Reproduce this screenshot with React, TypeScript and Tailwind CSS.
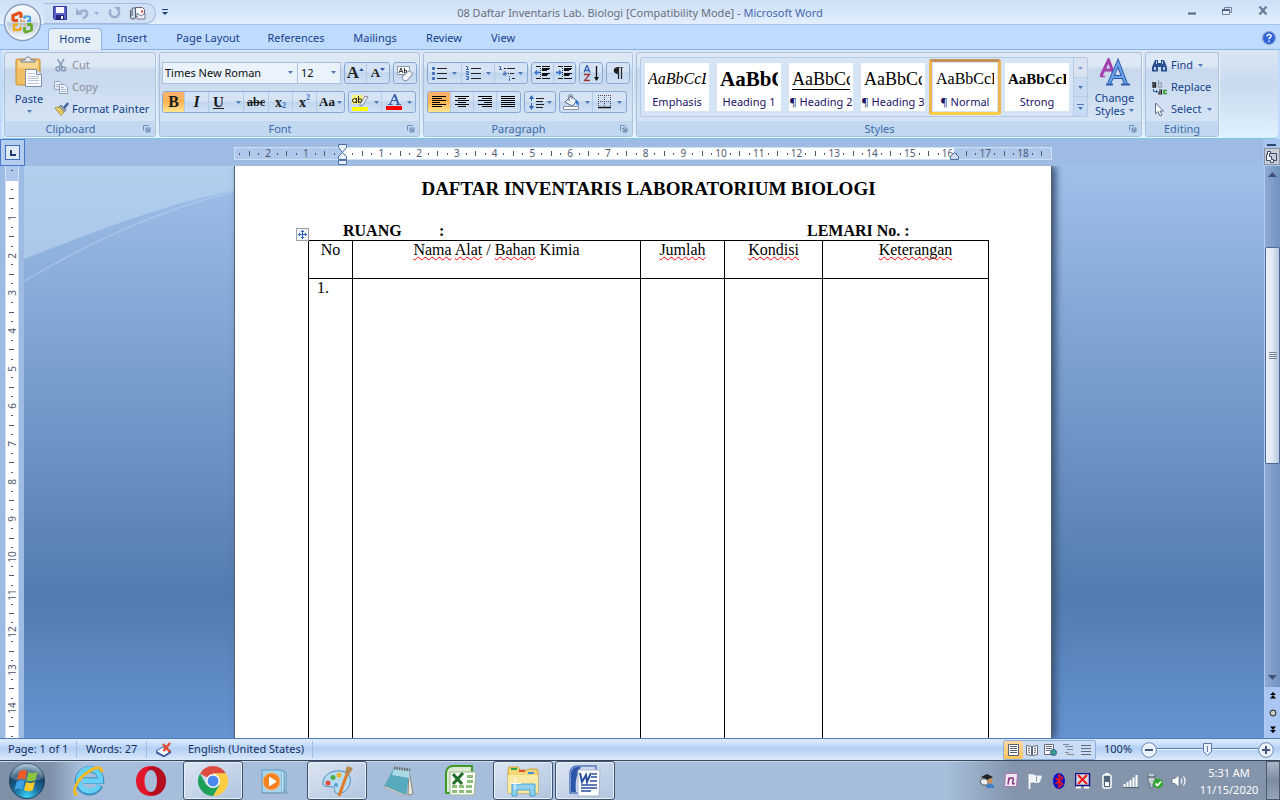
import React from "react";

type Kids = { children?: React.ReactNode; className?: string };

function Art({ w, h, children, className = "" }: Kids & { w: number; h: number }) {
  return (
    <svg aria-hidden="true" width={w} height={h} viewBox={`0 0 ${w} ${h}`} fill="none" className={`shrink-0 ${className}`}>
      {children}
    </svg>
  );
}

function Caret({ className = "" }: { className?: string }) {
  return (
    <Art w={5} h={3} className={className}>
      <path d="M0 0h5L2.500 3z" fill="#4d78b8" />
    </Art>
  );
}

function Group({ title, launcher, className = "", children }: Kids & { title: string; launcher?: boolean }) {
  return (
    <section
      aria-label={title}
      className={`flex shrink-0 flex-col overflow-hidden rounded-[3px] border border-[#a9c1de] bg-linear-to-b from-[#dde8f5] from-15% via-[#c8d8ed] via-20% to-[#d9e8f7] shadow-[1px_1px_0_#eaf3fc] ${className}`}
    >
      <div className="flex min-h-0 flex-1">{children}</div>
      <div className="flex h-[15px] shrink-0 items-center bg-[#c1d8f0] text-[#3e6aaa]">
        <span className={`flex-1 text-center leading-[15px] ${launcher ? "pr-[6px]" : ""}`}>{title}</span>
        {launcher && (
          <button aria-label={`${title} options`} className="mr-1">
            <Art w={9} h={9}>
              <path d="M1.500 6.500v-5h5" stroke="#6b8fbd" />
              <path d="M4 4h4v4H4z" fill="#fff" stroke="#6b8fbd" />
              <path d="M4 4l3 3M7 4.500V7H4.500" stroke="#4a6f9f" />
            </Art>
          </button>
        )}
      </div>
    </section>
  );
}

function Cluster({ children }: Kids) {
  return (
    <div className="flex h-[22px] shrink-0 divide-x divide-[#b4cbe8] overflow-hidden rounded-[3px] border border-[#89a9d5] bg-linear-to-b from-[#d6e3f4] from-45% via-[#c0d5ee] via-50% to-[#d0e1f5]">
      {children}
    </div>
  );
}

function Tool({ label, arrow, on, className = "w-[23px]", children }: Kids & { label: string; arrow?: boolean; on?: boolean }) {
  return (
    <button
      aria-label={label}
      className={`flex h-full items-center justify-center ${arrow ? "gap-[5px]" : ""} ${on ? "bg-linear-to-b from-[#f9b469] from-20% via-[#fdb04c] via-45% to-[#ffe78d]" : ""} ${className}`}
    >
      {children}
      {arrow && <Caret />}
    </button>
  );
}

function Lines({ rows }: { rows: [number, number][] }) {
  return (
    <Art w={15} h={12}>
      {rows.map(([x, w], i) => (
        <path key={i} d={`M${x} ${i * 2 + 0.5}h${w}`} stroke="#000" />
      ))}
    </Art>
  );
}

function ListIcon({ marks }: { marks: React.ReactNode }) {
  return (
    <Art w={15} h={14}>
      {marks}
      <path d="M5 2.500h10M5 7.500h10M5 12.500h10" stroke="#222" />
    </Art>
  );
}

function IndentIcon({ left }: { left?: boolean }) {
  return (
    <Art w={17} h={14}>
      <path d="M2 .5h4M8 .5h8M8 2.500h8M8 4.500h5M8 7.500h8M8 9.500h5M2 12.500h4M8 12.500h8" stroke="#111" />
      <path d="M8 3.500h7M8 8.500h6" stroke="#111" />
      <path d="M6.500 0v14" stroke="#333" strokeDasharray="1 1" />
      {left ? <path d="M0 6.500l3-3v2h3v2H3v2z" fill="#3b74d0" /> : <path d="M6 6.500l-3-3v2H0v2h3v2z" fill="#3b74d0" />}
    </Art>
  );
}

const tabs = [
  ["Insert", "w-[54px] mr-[9px]"],
  ["Page Layout", "w-[80px] mr-[12px]"],
  ["References", "w-[72px] mr-[12px]"],
  ["Mailings", "w-[62px] mr-[12px]"],
  ["Review", "w-[52px] mr-[14px]"],
  ["View", "w-[38px]"],
];

const styleCards = [
  { name: "Emphasis", text: "AaBbCcD", sample: "text-[16px] italic" },
  { name: "Heading 1", text: "AaBbC", sample: "text-[21px] font-bold" },
  { name: "¶ Heading 2", text: "AaBbCc", sample: "text-[18px] underline underline-offset-4" },
  { name: "¶ Heading 3", text: "AaBbCc", sample: "text-[18px]" },
  { name: "¶ Normal", text: "AaBbCcD", sample: "text-[16px]", on: true },
  { name: "Strong", text: "AaBbCcD", sample: "text-[15px] font-bold" },
];

function TitleBar() {
  return (
    <header className="relative flex h-[25px] shrink-0 items-center border-b border-[#a5c6ef] bg-linear-to-b from-[#cfe0f6] via-[#d6e6fa] to-[#e4effd]">
      <div className="mt-[2px] ml-[44px] flex h-[21px] w-[112px] items-center rounded-r-full border border-l-0 border-[#9fbbe0] bg-[#d0e1f6] pl-[9px]">
        <button aria-label="Save">
          <Art w={14} h={14}>
            <path d="M.5.5h13v13h-12l-1-1z" fill="#5a62c8" stroke="#33389a" />
            <path d="M3 1h8v6H3z" fill="#f4f7ff" />
            <path d="M3 9h8v5H3z" fill="#23277c" />
            <path d="M8 10h2v3H8z" fill="#fff" />
          </Art>
        </button>
        <button aria-label="Undo" className="ml-[9px]">
          <Art w={13} h={13}>
            <path d="M4 5.500c4-3.500 7.500-1.500 7 1.500-.3 2-2 3.500-4 4.500" stroke="#9cafcf" strokeWidth="2.600" />
            <path d="M0 1v7h7z" fill="#9cafcf" />
          </Art>
        </button>
        <Caret className="ml-[5px] opacity-50" />
        <button aria-label="Repeat" className="ml-[9px]">
          <Art w={13} h={13}>
            <path d="M3 2.500a4.600 4.600 0 1 0 7 0" stroke="#9cafcf" strokeWidth="2.600" />
            <path d="M6 0h6v6z" fill="#9cafcf" />
          </Art>
        </button>
        <button aria-label="Attach to e-mail" className="ml-[8px]">
          <Art w={17} h={15}>
            <path d="M6.500 1.500h7l2 2v7h-9z" fill="#fff" stroke="#667" />
            <path d="M8 7l4 3 4-3v6H8z" fill="#eef" stroke="#778" />
            <path d="M12 4.500h2v2h-2z" fill="#e33" />
            <path d="M1.500 4v6.500a2.500 2.500 0 0 0 5 0V3.500a1.700 1.700 0 0 0-3.400 0V10" stroke="#56606e" strokeWidth="1.100" />
          </Art>
        </button>
      </div>
      <button aria-label="Customize toolbar" className="ml-[6px]">
        <Art w={6} h={6}>
          <path d="M0 .5h6" stroke="#1c3f75" />
          <path d="M0 3h6L3 6z" fill="#1c3f75" />
        </Art>
      </button>
      <h1 className="flex-1 pt-[3px] pr-[76px] text-center text-[#6a6f7c]">
        08 Daftar Inventaris Lab. Biologi [Compatibility Mode] <span className="text-[#4668ad]">- Microsoft Word</span>
      </h1>
      <div className="flex items-center gap-[26px] pr-[12px] pb-[3px]">
        <button aria-label="Minimize">
          <Art w={8} h={8}>
            <path d="M0 6.500h8" stroke="#536582" strokeWidth="2" />
          </Art>
        </button>
        <button aria-label="Restore">
          <Art w={10} h={8}>
            <path d="M2.500 2V.5h7v5H8" stroke="#6f83a5" />
            <path d="M.5 2.500h7v5h-7z" fill="#e6effb" stroke="#6f83a5" />
            <path d="M0 3h8" stroke="#536582" strokeWidth="2" />
          </Art>
        </button>
        <button aria-label="Close">
          <Art w={10} h={9}>
            <path d="M1.500.5l7 8M8.500.5l-7 8" stroke="#6a7c9a" strokeWidth="2.300" />
          </Art>
        </button>
      </div>
      <button aria-label="Office menu" className="absolute top-[3px] left-[3px] z-10">
        <Art w={39} h={39}>
          <defs>
            <linearGradient id="orb" x1="0" y1="0" x2="0" y2="1">
              <stop offset="0" stopColor="#fff" />
              <stop offset=".48" stopColor="#dce5f0" />
              <stop offset=".52" stopColor="#bccbdd" />
              <stop offset="1" stopColor="#fafdff" />
            </linearGradient>
          </defs>
          <circle cx="19.500" cy="19.500" r="18" fill="url(#orb)" stroke="#8a9fbe" strokeWidth="1.500" />
          <circle cx="19.500" cy="19.500" r="16.500" stroke="#f6faff" />
          <path d="M15 17.500h-3.500a1.500 1.500 0 0 1-1.500-1.500v-3.500l6-2.500a1.500 1.500 0 0 1 2 1.500V15" stroke="#e2531b" strokeWidth="3.200" />
          <path d="M21.500 16v-2.500h4.500a1 1 0 0 1 1 1V18h-3" stroke="#4d9fe0" strokeWidth="2.200" />
          <path d="M15 21.500h-3a1 1 0 0 0-1 1V27h5.500a1 1 0 0 0 1-1v-2" stroke="#f2a61d" strokeWidth="2.500" />
          <path d="M24 21.500h3.500a1 1 0 0 1 1 1v4.500l-5 2a1.500 1.500 0 0 1-2-1.500V24" stroke="#66ab2e" strokeWidth="2.800" />
          <path d="M17 17.500h1.500v1.500M21 19v-1.500M17.500 21.500h1M21 21.500h1" stroke="#e88a3a" strokeWidth="1.500" />
        </Art>
      </button>
    </header>
  );
}

function ClipboardGroup() {
  return (
    <Group title="Clipboard" launcher className="w-[152px]">
      <button className="flex w-[48px] flex-col items-center pt-[3px] text-[#15428b]">
        <Art w={28} h={32}>
          <rect x="1" y="3" width="24" height="26" rx="1.500" fill="#f0bf63" stroke="#c48f35" />
          <path d="M3 5h20v7H3z" fill="#f8d68f" />
          <path d="M6 6V4h4c0-4 6-4 6 0h4v2z" fill="#e8ebf0" stroke="#777f8c" />
          <path d="M10.500 13.500h11l5 5v12h-16z" fill="#fdfdff" stroke="#7d8fae" />
          <path d="M21.500 13.500v5h5" stroke="#7d8fae" fill="#dfe8f5" />
          <path d="M13 17.500h7M13 20.500h11M13 22.500h11M13 24.500h11M13 27.500h11" stroke="#b9c4d8" />
        </Art>
        <span className="mt-[3px] leading-[15px]">Paste</span>
        <Caret className="mt-[4px]" />
      </button>
      <div className="flex flex-col pt-[1px] pl-px text-[#8b8f99]">
        <button className="flex h-[22px] items-center gap-[4px]">
          <Art w={14} h={14}>
            <path d="M3.500 1l5 8.500M10 1L5 9.500" stroke="#8b9bb5" strokeWidth="1.500" />
            <circle cx="4" cy="11" r="2" stroke="#8b9bb5" strokeWidth="1.500" />
            <circle cx="9.500" cy="11" r="2" stroke="#8b9bb5" strokeWidth="1.500" />
          </Art>
          Cut
        </button>
        <button className="flex h-[22px] items-center gap-[4px]">
          <Art w={14} h={13}>
            <path d="M.5.5h5l2 2v6h-7z" fill="#e9eef7" stroke="#93a3bd" />
            <path d="M2 3.500h3M2 5.500h4" stroke="#a9b6cb" />
            <path d="M5.500 3.500h5l3 3v6h-8z" fill="#f0f4fa" stroke="#93a3bd" />
            <path d="M7 6.500h3M7 8.500h5M7 10.500h5" stroke="#a9b6cb" />
          </Art>
          Copy
        </button>
        <button className="flex h-[22px] items-center gap-[3px] text-[#15428b]">
          <Art w={15} h={14}>
            <path d="M9 5l4.500-5L15 2l-4 5z" fill="#4765a8" />
            <path d="M7 3l5 5-2 2-5-5z" fill="#9aa7bd" stroke="#515d74" strokeWidth=".7" />
            <path d="M1 6l4.500-1 4.500 5-3 3.500z" fill="#f7df7c" stroke="#9a7b2d" strokeWidth=".8" />
            <path d="M3 7.500l5 4M4.500 6.500l4 4" stroke="#c09c40" strokeWidth=".7" />
          </Art>
          Format Painter
        </button>
      </div>
    </Group>
  );
}

function FontGroup() {
  return (
    <Group title="Font" launcher className="w-[261px]">
      <div className="flex flex-col gap-[7px] pt-[9px] pl-[2px]">
        <div className="flex items-center">
          <label className="relative">
            <select aria-label="Font family" className="h-[22px] w-[136px] appearance-none border border-[#abc1de] bg-[#eaf2fb] pl-[2px] leading-[20px] text-[#111]">
              <option>Times New Roman</option>
            </select>
            <Caret className="absolute top-[9px] right-[5px]" />
          </label>
          <label className="relative">
            <select aria-label="Font size" className="h-[22px] w-[43px] appearance-none border border-l-0 border-[#abc1de] bg-[#eaf2fb] pl-[3px] leading-[20px] text-[#111]">
              <option>12</option>
            </select>
            <Caret className="absolute top-[9px] right-[5px]" />
          </label>
          <div className="ml-[3px] flex gap-[3px] font-['Liberation_Serif',serif] font-bold text-[#222]">
            <Cluster>
              <Tool label="Grow font" className="w-[22px] text-[17px]">
                A
                <Art w={5} h={10}>
                  <path d="M0 3h5L2.500 0z" fill="#2f5ca8" />
                </Art>
              </Tool>
              <Tool label="Shrink font" className="w-[22px] text-[13px]">
                A
                <Art w={5} h={10}>
                  <path d="M0 0h5L2.500 3z" fill="#2f5ca8" />
                </Art>
              </Tool>
            </Cluster>
            <Cluster>
              <Tool label="Clear formatting" className="w-[22px]">
                <Art w={16} h={17}>
                  <path d="M.5 1.500h12v8H.5z" fill="#fff" stroke="#8a97ad" />
                  <path d="M2 8l2-5 2 5M3 6.500h2" stroke="#222" strokeWidth=".9" />
                  <path d="M7.500 3v5h2V5.500h-2" stroke="#222" strokeWidth=".9" />
                  <path d="M5 12l6-5.500c2-1 5 1 4 3.500l-5 5.500c-3 1-5-1-5-3.500z" fill="#f1f3f8" stroke="#77839b" />
                </Art>
              </Tool>
            </Cluster>
          </div>
        </div>
        <div className="flex gap-[3px] font-['Liberation_Serif',serif] text-[#1a1a1a]">
          <Cluster>
            <Tool label="Bold" on className="w-[22px] text-[16px] font-bold">B</Tool>
            <Tool label="Italic" className="w-[24px] text-[16px] font-bold italic">I</Tool>
            <Tool label="Underline" arrow className="w-[35px] pl-[2px] text-[15px] font-bold">
              <span className="underline">U</span>
              <span className="w-[2px]" />
            </Tool>
            <Tool label="Strikethrough" className="w-[25px] text-[12px] font-bold line-through">abc</Tool>
            <Tool label="Subscript" className="w-[24px] text-[14px] font-bold">
              x<span className="mt-[8px] text-[8px] text-[#2f6ac8]">2</span>
            </Tool>
            <Tool label="Superscript" className="w-[24px] text-[14px] font-bold">
              x<span className="mb-[9px] text-[8px] text-[#2f6ac8]">2</span>
            </Tool>
            <Tool label="Change case" className="w-[27px] text-[13px] font-bold">
              Aa<Caret className="ml-[2px]" />
            </Tool>
          </Cluster>
          <Cluster>
            <Tool label="Highlight color" arrow className="w-[33px]">
              <Art w={17} h={17}>
                <path d="M0 1h11v9H0z" fill="#f6f17c" />
                <path d="M8 10l5-8 3 1-5 8-3 1z" fill="#e5e9f1" stroke="#6b7689" strokeWidth=".8" />
                <circle cx="2.500" cy="6.500" r="2" stroke="#222" />
                <path d="M4.500 4v5M6.500 2v7" stroke="#222" />
                <circle cx="8" cy="6.500" r="1.700" stroke="#222" />
                <path d="M0 13h16v4H0z" fill="#ff0" />
              </Art>
            </Tool>
            <Tool label="Font color" arrow className="w-[33px]">
              <Art w={16} h={16}>
                <path d="M8 0h1.500l4 10H15v1h-5v-1h1.300L10.200 7H6l-1 3h1.500v1H2v-1h1.500z M8 2.500L6.400 6h3.400z" fill="#365ea8" fillRule="evenodd" />
                <path d="M0 12h16v4H0z" fill="#f00" />
              </Art>
            </Tool>
          </Cluster>
        </div>
      </div>
    </Group>
  );
}

function ParagraphGroup() {
  return (
    <Group title="Paragraph" launcher className="w-[210px]">
      <div className="flex flex-col gap-[7px] pt-[9px] pl-[3px]">
        <div className="flex gap-[3px]">
          <Cluster>
            <Tool label="Bullets" arrow className="w-[34px]">
              <ListIcon
                marks={
                  <g fill="#3f68b5">
                    <rect y="1" width="3" height="3" rx="1" />
                    <rect y="6" width="3" height="3" rx="1" />
                    <rect y="11" width="3" height="3" rx="1" />
                  </g>
                }
              />
            </Tool>
            <Tool label="Numbering" arrow className="w-[33px]">
              <ListIcon marks={<path d="M0 .5h1.500v3M0 3.500h3M0 5.500h2.500v1.500H.5v1.500H3M0 10.500h2.500v3H0M1 12h1.500" stroke="#3f68b5" />} />
            </Tool>
            <Tool label="Multilevel list" className="w-[32px] gap-[2px]">
              <Art w={17} h={15}>
                <path d="M0 .5h1.500v3M0 3.500h3M4.500 6h2.500v3H4.500V7.500H7M10.500 10v1M10.500 12v3" stroke="#3f68b5" />
                <path d="M5 2.500h2M8 2.500h8M9 7.500h1M11 7.500h4M13 12.500h3" stroke="#222" />
              </Art>
              <Caret />
            </Tool>
          </Cluster>
          <Cluster>
            <Tool label="Decrease indent" className="w-[22px]">
              <IndentIcon left />
            </Tool>
            <Tool label="Increase indent" className="w-[21px]">
              <IndentIcon />
            </Tool>
          </Cluster>
          <Cluster>
            <Tool label="Sort" className="w-[22px]">
              <Art w={17} h={17}>
                <path d="M1 7.500L4 0l3 7.500M2 5.500h4" stroke="#3564b5" strokeWidth="1.300" />
                <path d="M1 9.500h5.500l-5 6H7" stroke="#a03333" strokeWidth="1.300" />
                <path d="M13.500 1v14" stroke="#111" strokeWidth="1.300" />
                <path d="M11 12h5l-2.500 4z" fill="#111" />
              </Art>
            </Tool>
          </Cluster>
          <Cluster>
            <Tool label="Show marks" className="w-[22px]">
              <Art w={12} h={12}>
                <path d="M6 0H11.500M6.500 0v12M9.500 0v12" stroke="#222" strokeWidth="1.200" />
                <path d="M6.500 0C0 0 0 7 6.500 7z" fill="#222" />
              </Art>
            </Tool>
          </Cluster>
        </div>
        <div className="flex gap-[3px]">
          <Cluster>
            <Tool label="Align left" on>
              <Lines rows={[[0, 14], [0, 10], [0, 14], [0, 8], [0, 14], [0, 10]]} />
            </Tool>
            <Tool label="Center">
              <Lines rows={[[0, 14], [3, 8], [0, 14], [3, 8], [0, 14], [3, 8]]} />
            </Tool>
            <Tool label="Align right">
              <Lines rows={[[0, 14], [4, 10], [0, 14], [6, 8], [0, 14], [4, 10]]} />
            </Tool>
            <Tool label="Justify">
              <Lines rows={[[0, 14], [0, 14], [0, 14], [0, 14], [0, 14], [0, 14]]} />
            </Tool>
          </Cluster>
          <Cluster>
            <Tool label="Line spacing" className="w-[30px] gap-[2px]">
              <Art w={16} h={15}>
                <path d="M2.500 2v11" stroke="#2f62b8" strokeDasharray="4 2 6" />
                <path d="M0 4l2.500-4L5 4zM0 11l2.500 4L5 11z" fill="#2f62b8" />
                <path d="M7 3.500h8M7 6.500h7M7 9.500h8M7 12.500h7" stroke="#222" />
              </Art>
              <Caret />
            </Tool>
          </Cluster>
          <Cluster>
            <Tool label="Shading" arrow className="w-[33px]">
              <Art w={17} h={16}>
                <path d="M2 8l6-6 6 5-5 5z" fill="#eef2f9" stroke="#5c6a84" />
                <path d="M6 7V2c0-2 3-2 3 0v3" stroke="#5c6a84" />
                <path d="M13 6c3 1 3 4 2.500 6-1.500-1-2-3-3.500-4z" fill="#2f6ac8" />
                <path d="M.5 12.500h15v3H.5z" fill="#fff" stroke="#8893a6" />
              </Art>
            </Tool>
            <Tool label="Borders" arrow className="w-[33px]">
              <Art w={14} h={14}>
                <path d="M0 .5h13M0 6.500h13M.5 0v12M6.500 0v12M12.500 0v12" stroke="#445" strokeDasharray="1 1" />
                <path d="M0 12.500h13" stroke="#111" strokeWidth="1.400" />
              </Art>
            </Tool>
          </Cluster>
        </div>
      </div>
    </Group>
  );
}

function StylesGroup() {
  return (
    <Group title="Styles" launcher className="w-[506px]">
      <div className="mt-[4px] ml-[3px] flex h-[60px] rounded-[2px] border border-[#b4cbe8] bg-[#d5e5f6]">
        <div className="flex items-center">
          {styleCards.map((s) => (
            <button
              key={s.name}
              className={`flex h-[56px] w-[72px] flex-col border-[3px] p-px ${s.on ? "rounded-[3px] border-[#eeb44f] border-t-[#c29158] border-b-[#fbcf45]" : "border-transparent"}`}
            >
              <span className="flex h-[48px] w-[64px] flex-col bg-white">
                <span className={`ml-[3px] flex h-[31px] w-[58px] items-center overflow-hidden text-left font-['Liberation_Serif',serif] leading-[30px] text-black ${s.sample}`}>
                  {s.text}
                </span>
                <span className="text-center leading-[16px] whitespace-nowrap text-[#1a1466]">{s.name}</span>
              </span>
            </button>
          ))}
        </div>
        <div className="flex w-[14px] flex-col divide-y divide-[#b4cbe8] border-l border-[#b4cbe8] bg-[#c8dbf2]">
          <button aria-label="Previous styles" className="flex flex-1 items-center justify-center bg-[#e6e9ee] opacity-60">
            <Caret className="rotate-180" />
          </button>
          <button aria-label="Next styles" className="flex flex-1 items-center justify-center">
            <Caret />
          </button>
          <button aria-label="All styles" className="flex flex-1 flex-col items-center justify-center gap-[2px]">
            <span className="h-px w-[7px] bg-[#4d78b8]" />
            <Caret />
          </button>
        </div>
      </div>
      <button className="flex flex-1 flex-col items-center pt-[5px] text-[#15428b]">
        <Art w={30} h={29}>
          <path d="M1 18L8.500 2l6 16M4 12h8" stroke="#a43fae" strokeWidth="3" />
          <path d="M0 18.500h5" stroke="#a43fae" strokeWidth="1.500" />
          <path d="M9 26L18 5l8 21M12.500 19h11" stroke="#2c5fb0" strokeWidth="4" />
          <path d="M9 26L18 5l8 21M12.500 19h11" stroke="#6ea3e8" strokeWidth="2" />
          <path d="M6 26.500h7M21 26.500h9" stroke="#2c5fb0" strokeWidth="2" />
        </Art>
        <span className="mt-[4px] leading-[13px]">Change</span>
        <span className="flex items-center gap-[4px] leading-[13px]">
          Styles <Caret />
        </span>
      </button>
    </Group>
  );
}

function EditingGroup() {
  return (
    <Group title="Editing" className="w-[74px]">
      <div className="flex flex-col pt-[1px] pl-[6px] text-[#15428b]">
        <button className="flex h-[22px] items-center gap-[4px]">
          <Art w={15} h={13}>
            <path d="M3 1h3v3h3V1h3l3 7v4.500H9V8H6v4.500H0V8z" fill="#2c4f8f" />
            <path d="M2 8h2v3H2zM11 8h2v3h-2zM4 2h1v3H4zM10 2h1v3h-1z" fill="#b8cdf0" />
          </Art>
          Find <Caret className="ml-[1px]" />
        </button>
        <button className="flex h-[22px] items-center gap-[4px]">
          <Art w={15} h={15}>
            <path d="M0 3h3.500v4H1V5h3" stroke="#222" strokeWidth="1.300" />
            <path d="M6.500 0v7h3V3h-3" stroke="#9aa3b3" strokeWidth="1.300" />
            <path d="M1.500 9v2.500H5M4 10l1.500 1.500L4 13" stroke="#2f5ca8" />
            <path d="M7 10h2.500v4H7v-2h2.500" stroke="#222" strokeWidth="1.200" />
            <path d="M15 10.500h-3v3h3" stroke="#2c9a2c" strokeWidth="1.500" />
          </Art>
          Replace
        </button>
        <button className="flex h-[22px] items-center gap-[4px]">
          <Art w={15} h={15}>
            <path d="M3.500 1v11l2.500-2.500L8 14l2-1-2-4h3.500z" fill="#fff" stroke="#5a6d8c" />
          </Art>
          Select <Caret className="ml-[1px]" />
        </button>
      </div>
    </Group>
  );
}

function range(from: number, to: number) {
  return Array.from({ length: to - from + 1 }, (_, i) => from + i);
}

function Ruler() {
  return (
    <div className="flex h-[27px] shrink-0 bg-[#9dbbe3]">
      <div className="flex w-[25px] items-center justify-center border border-[#4a78c8] bg-[#b5cdee]">
        <button aria-label="Tab stop" className="flex h-[15px] w-[15px] items-center justify-center border border-[#3f6cb8] bg-[#dfe9f7]">
          <Art w={6} h={6}>
            <path d="M1 0v5h5" stroke="#1f3f6e" strokeWidth="2" />
          </Art>
        </button>
      </div>
      <div className="flex flex-1 justify-center pt-[8px] pr-[2px]">
        <div className="relative flex h-[13px] w-[818px] border border-[#cfdff5] bg-linear-to-r from-[#afc8ec] from-[107px] via-white via-[107px] to-white to-[720px] pr-[5px]">
          <div className="absolute inset-y-0 right-0 w-[97px] bg-[#afc8ec]" />
          <div className="relative flex flex-1 text-[10px] text-[#4e5a70]">
            {range(-11, 74).map((q) => (
              <span key={q} className="flex w-0 flex-1 items-center justify-center">
                {q % 4 === 0 ? (
                  q !== 0 && <span className="leading-[11px]">{Math.abs(q / 4)}</span>
                ) : q % 2 === 0 ? (
                  <span className="h-[5px] w-px bg-[#4e5a70]" />
                ) : (
                  <span className="h-[2px] w-px bg-[#4e5a70]" />
                )}
              </span>
            ))}
          </div>
          <Art w={11} h={22} className="absolute -top-[4px] left-[102px]">
            <path d="M1.500.5h8v3l-4 5-4-5zM5.500 8.500l4 4v3h-8v-3z" fill="#e8eef8" stroke="#4e6fa5" />
            <path d="M1.500 16.500h8v4h-8z" fill="#e8eef8" stroke="#4e6fa5" />
          </Art>
          <Art w={9} h={9} className="absolute top-[4px] right-[92px]">
            <path d="M4.500.5l4 4v3h-8v-3z" fill="#cfdcf0" stroke="#4e6fa5" />
          </Art>
        </div>
      </div>
      <div className="flex w-[17px] flex-col items-center gap-[2px] bg-[#a8c6f0] pt-[5px]">
        <span className="h-[2px] w-[9px] bg-[#38456b]" />
        <button aria-label="View ruler" className="flex h-[17px] w-[16px] items-center justify-center border border-[#8c93a5] bg-[#c9ccd6]">
          <Art w={13} h={12}>
            <path d="M4.500 2.500h7v7h-3" stroke="#3a4a68" />
            <path d="M2.500.5h3v2h-1v3h2v3h2v3h-3v-2h-4v-6h1z" fill="#f4f7fc" stroke="#3a4a68" />
          </Art>
        </button>
      </div>
    </div>
  );
}

function Misspelt({ children }: Kids) {
  return <span className="underline decoration-[#ff0000] decoration-wavy decoration-1 underline-offset-1 [text-decoration-skip-ink:none]">{children}</span>;
}

function Workspace() {
  return (
    <main className="relative flex min-h-0 flex-1 overflow-hidden bg-linear-to-b from-[#9fc0e9] via-[#527cb0] via-75% to-[#6693d2]">
      <div className="flex w-[24px] shrink-0 justify-center bg-[#9dbbe3] pr-px">
        <div className="relative h-full w-[14px] overflow-hidden border-x border-[#cfdff5] bg-white">
          <div className="h-[15px] bg-[#afc8ec]" />
          <div className="absolute inset-x-0 top-0 flex h-[575px] flex-col text-[10px] text-[#4e5a70]">
            {range(-1, 59).map((q) => (
              <span key={q} className="flex h-0 flex-1 items-center justify-center">
                {q % 4 === 0 ? (
                  q !== 0 && <span className="-rotate-90 leading-[12px]">{q / 4}</span>
                ) : q % 2 === 0 ? (
                  <span className="h-px w-[5px] bg-[#4e5a70]" />
                ) : (
                  <span className="h-px w-[2px] bg-[#4e5a70]" />
                )}
              </span>
            ))}
          </div>
        </div>
      </div>
      <div className="relative flex flex-1 justify-center pr-[2px]">
        <Art w={212} h={120} className="absolute top-0 left-0">
          <path d="M0 0h212v24C140 38 70 66 0 93z" fill="#c3daf2" fillOpacity=".55" />
          <path d="M0 115C60 80 130 45 212 25" stroke="#b6cfee" strokeOpacity=".6" strokeWidth="1.500" />
        </Art>
        <article className="relative flex w-[818px] flex-col border-x border-[#56606e] bg-white pl-[73px] font-['Liberation_Serif',serif] text-[16px] text-black shadow-[4px_0_7px_#3d5578]">
          <h2 className="mt-[12px] pr-[62px] text-center text-[19px] leading-[22px] font-bold">DAFTAR INVENTARIS LABORATORIUM BIOLOGI</h2>
          <p className="mt-[21px] flex pl-[35px] leading-[19px] font-bold whitespace-pre">
            <span className="w-[96px]">RUANG</span>
            <span className="w-[368px]">:</span>
            <span>LEMARI No. :</span>
          </p>
          <button aria-label="Select table" className="absolute top-[62px] left-[61px] flex h-[13px] w-[13px] items-center justify-center border border-[#9aa0aa] bg-[#f0f2f6]">
            <Art w={9} h={9}>
              <path d="M4.500 0v9M0 4.500h9M3 1.500h3M3 7.500h3M1.500 3v3M7.500 3v3" stroke="#2f62c0" />
            </Art>
          </button>
          <table className="h-full w-[681px] table-fixed border-collapse [&_td]:border [&_td]:border-black [&_th]:border [&_th]:border-black">
            <colgroup>
              <col className="w-[44px]" />
              <col className="w-[288px]" />
              <col className="w-[84px]" />
              <col className="w-[98px]" />
              <col className="w-[166px]" />
            </colgroup>
            <thead>
              <tr className="h-[38px] align-top leading-[18px]">
                <th className="font-normal">No</th>
                <th className="font-normal">
                  <Misspelt>Nama</Misspelt> <Misspelt>Alat</Misspelt> / <Misspelt>Bahan</Misspelt> Kimia
                </th>
                <th className="font-normal">
                  <Misspelt>Jumlah</Misspelt>
                </th>
                <th className="font-normal">
                  <Misspelt>Kondisi</Misspelt>
                </th>
                <th className="pl-[20px] font-normal">
                  <Misspelt>Keterangan</Misspelt>
                </th>
              </tr>
            </thead>
            <tbody>
              <tr className="h-[480px] align-top leading-[18px]">
                <td className="pl-[8px]">1.</td>
                <td />
                <td />
                <td />
                <td />
              </tr>
            </tbody>
          </table>
        </article>
      </div>
      <div className="flex w-[16px] shrink-0 flex-col border-l border-[#b3cdf2] bg-linear-to-r from-[#8eaad0] to-[#7193c0]">
        <button aria-label="Scroll up" className="flex h-[81px] justify-center pt-[6px]">
          <Art w={9} h={5}>
            <path d="M0 5h9L4.500 0z" fill="#45507a" />
          </Art>
        </button>
        <div className="flex h-[217px] flex-col items-center justify-center gap-px rounded-[2px] border border-[#4c6796] bg-linear-to-r from-[#eef2fa] via-[#dfe7f2] to-[#b6c8de]">
          {range(0, 3).map((n) => (
            <span key={n} className="h-px w-[8px] bg-[#7d8695]" />
          ))}
        </div>
        <div className="flex-1" />
        <button aria-label="Scroll down" className="flex h-[12px] justify-center">
          <Art w={9} h={5}>
            <path d="M0 0h9L4.500 5z" fill="#45507a" />
          </Art>
        </button>
        <div className="flex h-[51px] flex-col items-center justify-between bg-[#a9c7f2] py-[5px]">
          <button aria-label="Previous page">
            <Art w={6} h={7}>
              <path d="M0 3h6L3 0zM0 6.500h6L3 3z" fill="#000" />
            </Art>
          </button>
          <button aria-label="Browse object">
            <Art w={8} h={8}>
              <circle cx="4" cy="4" r="3" fill="#c8ccc8" stroke="#222" />
            </Art>
          </button>
          <button aria-label="Next page">
            <Art w={6} h={7}>
              <path d="M0 .5h6L3 4zM0 4h6L3 7z" fill="#000" />
            </Art>
          </button>
        </div>
      </div>
    </main>
  );
}

function ZoomButton({ plus }: { plus?: boolean }) {
  return (
    <button aria-label={plus ? "Zoom in" : "Zoom out"}>
      <Art w={16} h={16}>
        <circle cx="8" cy="8" r="7.300" fill="#e8f0fb" stroke="#6586b5" />
        <circle cx="8" cy="8" r="5.800" stroke="#fff" />
        <path d={plus ? "M4 8h8M8 4v8" : "M4 8h8"} stroke="#44587c" strokeWidth="2" />
      </Art>
    </button>
  );
}

function StatusBar() {
  return (
    <footer className="flex h-[22px] shrink-0 items-center border-t border-[#4f7cb4] bg-linear-to-b from-[#d8e8fb] from-10% via-[#b3d0f5] via-45% to-[#dbe9fb] text-[#15305f]">
      <span className="w-[77px] border-r border-[#9fbde6] pl-[8px]">Page: 1 of 1</span>
      <span className="w-[70px] border-r border-[#9fbde6] pl-[9px]">Words: 27</span>
      <span className="flex w-[41px] pl-[8px]">
        <Art w={17} h={15}>
          <path d="M1 9l7-4 8 4-7 5z" fill="#f6f9ff" stroke="#3e5da0" />
          <path d="M1 10.500l8 4 7-4.500" stroke="#3e5da0" strokeWidth="1.500" />
          <path d="M8 2l7 8M15 1L8.500 9" stroke="#e8492c" strokeWidth="2.300" />
        </Art>
      </span>
      <span className="w-[125px] border-r border-[#9fbde6]">English (United States)</span>
      <span className="flex-1" />
      <div className="mr-[8px] flex h-[20px] items-center rounded-[2px] border border-[#8fb0de] bg-[#cadcf4]">
        <button aria-label="Print layout" className="flex h-[18px] w-[19px] items-center justify-center bg-linear-to-b from-[#fbd9a4] to-[#fdc35a]">
          <Art w={11} h={12}>
            <path d="M.5.5h10v11H.5z" fill="#fff" stroke="#56606e" />
            <path d="M2 2.500h7M2 4.500h7M2 6.500h7M2 8.500h7" stroke="#56606e" />
          </Art>
        </button>
        <button aria-label="Full screen reading" className="flex w-[18px] justify-center">
          <Art w={12} h={12}>
            <path d="M.5 1.500l5 1v9l-5-1zM11.500 1.500l-5 1v9l5-1z" fill="#fff" stroke="#5f6a7c" />
            <path d="M2 4l2 .5M2 6l2 .5M2 8l2 .5M8 4.500l2-.5M8 6.500l2-.5M8 8.500l2-.5" stroke="#5f6a7c" />
          </Art>
        </button>
        <button aria-label="Web layout" className="flex w-[18px] justify-center">
          <Art w={13} h={12}>
            <path d="M.5.5h9v10h-9z" fill="#fff" stroke="#5f6a7c" />
            <path d="M2 2.500h6M2 4.500h6M2 6.500h4" stroke="#5f6a7c" />
            <circle cx="9.500" cy="8.500" r="3" fill="#3d9b8a" stroke="#2b5a9b" />
          </Art>
        </button>
        <button aria-label="Outline" className="flex w-[18px] justify-center">
          <Art w={11} h={11}>
            <path d="M0 .5h6M2 2.500h8M4 5.500h6M2 8.500h4M4 10.500h7" stroke="#7c8798" />
          </Art>
        </button>
        <button aria-label="Draft" className="flex w-[18px] justify-center">
          <Art w={10} h={10}>
            <path d="M0 .5h10M0 3.500h10M0 6.500h10M0 9.500h10" stroke="#5f6a7c" />
          </Art>
        </button>
      </div>
      <span className="w-[37px]">100%</span>
      <ZoomButton />
      <label className="relative flex w-[101px] items-center">
        <Art w={101} h={15}>
          <path d="M0 6.500h101" stroke="#5c83b8" />
          <path d="M0 7.500h101" stroke="#eef5ff" />
          <path d="M46.500 1.500h8v8l-4 4-4-4z" fill="#e8f0fb" stroke="#5c7aa8" />
          <path d="M50.500 4v6" stroke="#5c7aa8" />
        </Art>
        <input type="range" aria-label="Zoom" min={10} max={190} defaultValue={100} className="absolute inset-0 opacity-0" />
      </label>
      <ZoomButton plus />
      <span className="w-[6px]" />
    </footer>
  );
}

function TaskButton({ label, open, children }: Kids & { label: string; open?: boolean }) {
  return (
    <button
      aria-label={label}
      className={`flex h-[39px] w-[60px] items-center justify-center rounded-[3px] border ${open ? "border-[#3f526c] bg-linear-to-br from-[#dce6f3] to-[#b0c4de] shadow-[inset_0_0_0_1px_#e6eef8]" : "border-transparent"}`}
    >
      {children}
    </button>
  );
}

function Taskbar() {
  return (
    <nav aria-label="Taskbar" className="flex h-[40px] shrink-0 items-center border-t border-[#35465d] bg-linear-to-r from-[#7e90a8] from-[50px] via-[#a6bedb] via-[80px] to-[#a6bedb] to-70% shadow-[inset_0_1px_0_#cbd9ea]">
      <button aria-label="Start" className="mr-[13px] ml-[8px]">
        <Art w={38} h={38}>
          <defs>
            <radialGradient id="start" cx=".5" cy=".95" r=".9">
              <stop offset="0" stopColor="#37d4f8" />
              <stop offset=".4" stopColor="#1b6f9f" />
              <stop offset=".75" stopColor="#174065" />
              <stop offset="1" stopColor="#8cb0c8" />
            </radialGradient>
          </defs>
          <circle cx="19" cy="19" r="17.500" fill="url(#start)" stroke="#23405e" />
          <path d="M3 16a16 15 0 0 1 32 0c-8 4-24 5-32 0z" fill="#fff" fillOpacity=".22" />
          <path d="M11 10c3-2.500 5-2.500 8-1l-2 8.500c-3-1.500-5-1.500-8 .5z" fill="#ef5a28" />
          <path d="M20.500 10c3 1.500 5 1.500 9-.5l-2 8.500c-3 2-5.500 1.500-9 .2z" fill="#8cc63f" />
          <path d="M8.500 20c3-2 5-2 8-.5l-2 8c-3-1.500-5-1-8 .5z" fill="#3fa0e6" />
          <path d="M18 20c3 1.500 5.500 1.500 9-.2l-2 8.200c-3 2-5.500 1.500-9 0z" fill="#fbc92c" />
        </Art>
      </button>
      <div className="flex gap-[2px]">
        <TaskButton label="Internet Explorer">
          <Art w={32} h={32}>
            <path d="M27 20.500A11.500 11.500 0 1 1 28 15.500H10" stroke="#3d8fc0" strokeWidth="6.500" />
            <path d="M26 20.500A11 11 0 1 1 27.500 15.800H10" stroke="#66d0f5" strokeWidth="5" />
            <path d="M4.500 30C-3 28 5 13 15 7c8-5.500 15-6 13.500.5" stroke="#f2bb21" strokeWidth="2.800" />
          </Art>
        </TaskButton>
        <TaskButton label="Opera">
          <Art w={32} h={32}>
            <path d="M16 1C8 1 1 7 1 16s7 15 15 15 15-6 15-15S24 1 16 1zm0 4c4 0 6 5 6 11s-2 11-6 11-6.500-5-6.500-11S12 5 16 5z" fill="#e3152b" fillRule="evenodd" />
            <path d="M20 1.700C27 3.500 31 9 31 16s-4 12.500-11 14.300c-3 .8-6-.8-7.500-4C14 27 15 27 16 27c4 0 6-5 6-11S20 5 16 5c-1 0-2 0-3.500.7C14 2.500 17 1 20 1.700z" fill="#8f0a18" fillOpacity=".55" />
          </Art>
        </TaskButton>
        <TaskButton label="Google Chrome" open>
          <Art w={32} h={32}>
            <path d="M16 16L3 8.500a15 15 0 0 1 26 0H16z" fill="#dd4b3e" />
            <path d="M16 16V8.500h13A15 15 0 0 1 16 31l6.500-11z" fill="#ffcd42" />
            <path d="M16 16l6.500 4L16 31A15 15 0 0 1 3 8.500L9.500 20z" fill="#1fa15d" />
            <circle cx="16" cy="16" r="7" fill="#fff" />
            <circle cx="16" cy="16" r="5.500" fill="#4a88ee" />
          </Art>
        </TaskButton>
        <TaskButton label="Media Player">
          <Art w={30} h={28}>
            <path d="M2 3h20v23H2z" fill="#a8d6ee" stroke="#5a9cc0" />
            <path d="M22 4h2v21h-2M24.500 5h1.500v19" stroke="#5a9cc0" fill="#c5e6f5" />
            <path d="M2 26h26l-4-3" stroke="#7d9bb8" />
            <circle cx="11.500" cy="14.500" r="8.500" fill="#f58220" stroke="#fbb36f" />
            <path d="M9 9.500v10l8-5z" fill="#fff" />
          </Art>
        </TaskButton>
        <TaskButton label="Paint" open>
          <Art w={32} h={32}>
            <path d="M2 17C3 9 12 5 20 6c9 1 11 8 8 15-3 6-9 9-13 7-3-2 0-5-3-6-4-1-11 1-10-5z" fill="#b5dcf2" stroke="#4d8db8" />
            <circle cx="7" cy="18" r="2.500" fill="#e34a34" />
            <circle cx="12" cy="12.500" r="2.500" fill="#4fae43" />
            <circle cx="18" cy="10" r="2.500" fill="#f3b32b" />
            <circle cx="15" cy="20" r="2" fill="#5c9bc5" />
            <path d="M18 31L26 9" stroke="#e37a24" strokeWidth="3" />
            <path d="M24 8l2-7 6 2-4 7z" fill="#b7884f" />
          </Art>
        </TaskButton>
        <TaskButton label="Notepad">
          <Art w={32} h={30}>
            <path d="M26 4l4 24-5 1z" fill="#e8e6da" stroke="#8b8b80" />
            <path d="M11 2l16 2-4 25-22-9z" fill="#57a9bd" />
            <path d="M11 2l16 2-1 8-17-3z" fill="#a9dbe6" />
            <path d="M1 20l22 9 1 1.500L2 22z" fill="#f0f0ea" stroke="#888" strokeWidth=".5" />
            <path d="M11 2l16 2" stroke="#6a6a6a" strokeWidth="3" strokeDasharray="1.500 1" />
          </Art>
        </TaskButton>
        <TaskButton label="Excel">
          <Art w={32} h={32}>
            <path d="M1 28V8c0-4 3-7 7-7h19v27z" fill="#dcebd2" stroke="#3f9a28" strokeWidth="2" />
            <path d="M5 7h26l-2 23H5z" fill="#fff" stroke="#9bb58c" />
            <path d="M22 10h6v3h-6zM22 15h6v3h-6zM21 20h6v3h-6zM21 25h6v3h-6zM14 25h5v3h-5zM7 25h5v3H7zM7 20h5v3H7zM14 20h5v3h-5z" fill="#8cbf78" />
            <path d="M8 9l9 10M18 8L8 19" stroke="#216e27" strokeWidth="3" />
          </Art>
        </TaskButton>
        <TaskButton label="File Explorer" open>
          <Art w={32} h={32}>
            <path d="M1 6l1-4h9l2 3h8l1-1h8l1 3v21H1z" fill="#f3d675" stroke="#c9a23c" />
            <path d="M4 3h6v2H4z" fill="#2fa84a" />
            <path d="M12 5h6v2h-6z" fill="#e34a34" />
            <path d="M21 7h6v2h-6z" fill="#3f8fe0" />
            <path d="M1 10h30v18H1z" fill="#fae9a2" />
            <path d="M5 31V19h23v12h-5v-6H10v6z" fill="#8fd0ee" stroke="#4ba3cf" />
            <path d="M8 13v11M3 18.500h11" stroke="#fff" />
          </Art>
        </TaskButton>
        <TaskButton label="Microsoft Word" open>
          <Art w={32} h={32}>
            <path d="M1 28V8c0-4 3-7 7-7h19v27z" fill="#cbd8f0" stroke="#5578bd" strokeWidth="1.500" />
            <path d="M2 8c0-3 3-6 6-6h4C7 10 6 18 7 27H2z" fill="#2c55a8" />
            <path d="M9 5h22l-1 26H9z" fill="#fff" stroke="#a5b4d0" />
            <path d="M11 8l2 9 4-7 1 7 4-9" stroke="#294fa0" strokeWidth="2" />
            <path d="M23 9h5M22 12h6M21 16h7M12 20h16M12 23h16M12 26h10" stroke="#294fa0" strokeWidth="1.600" />
          </Art>
        </TaskButton>
      </div>
      <div className="flex h-full flex-1 items-center justify-end bg-linear-to-r from-transparent from-50% to-[#8394ab] to-60%">
        <div className="flex gap-[8px]">
          <Art w={16} h={16}>
            <path d="M2 4l6-3 6 3-5 3z" fill="#222" />
            <path d="M1 8c2-3 6-3 8 0v4H3z" fill="#e9ecf0" stroke="#555" />
            <circle cx="11" cy="8" r="2.500" fill="#c98d55" />
            <path d="M7 15c0-6 8-6 8 0z" fill="#3d7fc0" />
          </Art>
          <Art w={16} h={16}>
            <path d="M2.500.5h12l-1 13H1.500z" fill="#f3e6f3" stroke="#a978a9" />
            <path d="M5 11.500l1-7M5.700 7c1.500-3 5-3 4.500-.5l-.6 3.500c0 1.300 1.200 1 1.900.2" stroke="#83377f" strokeWidth="1.500" />
          </Art>
          <Art w={16} h={16}>
            <path d="M2.500 1v15" stroke="#fff" strokeWidth="1.800" />
            <path d="M3.500 2c3-1.500 4 1.500 6 1h5l-2 6c-3 1.500-6-1-9 .5z" fill="#fff" fillOpacity=".9" stroke="#eef" />
            <path d="M9.500 3.500v5" stroke="#8394ab" />
          </Art>
          <Art w={16} h={16}>
            <ellipse cx="8" cy="8" rx="6" ry="8" fill="#0a12c8" />
            <path d="M4.500 5l7 6-3.500 3v-12l3.500 3-7 6" stroke="#f01818" strokeWidth="1.600" />
          </Art>
          <Art w={16} h={16}>
            <path d="M.5.5h14v12H.5z" fill="#d9d9de" stroke="#10108a" strokeWidth="1.500" />
            <path d="M3 2l9 9M12 2l-9 9" stroke="#f01818" strokeWidth="2" />
            <path d="M1 14.500h5M9 14.500h5" stroke="#fff" strokeWidth="2" />
          </Art>
          <Art w={16} h={16}>
            <rect x="4" y="2" width="8" height="13" rx="1.500" fill="#53657d" stroke="#fff" strokeWidth="1.500" />
            <path d="M6 0h4v2H6z" fill="#fff" />
            <path d="M6 9h4v4H6z" fill="#fff" />
          </Art>
          <Art w={16} h={16}>
            <path d="M1.500 14v-3M4.500 14v-5M7.500 14V7M10.500 14V4.500M13.500 14V2" stroke="#fff" strokeWidth="2" />
            <path d="M0 14.500h16" stroke="#46566c" strokeWidth=".8" />
          </Art>
          <Art w={16} h={16}>
            <path d="M1 1v3h7V1M1 4h7v5l-2 2v4H3v-4L1 9z" fill="#c4cad3" stroke="#5c6878" />
            <circle cx="11" cy="10.500" r="5" fill="#2fa52f" />
            <path d="M8.500 10.500l2 2 3.500-4" stroke="#fff" strokeWidth="1.800" />
          </Art>
          <Art w={16} h={16}>
            <path d="M1 5.500h3l4-4v13l-4-4H1z" fill="#fff" stroke="#56657b" strokeWidth=".7" />
            <path d="M10 5.500c1 1.500 1 3.500 0 5M12.500 3.500c2 3 2 6 0 9" stroke="#fff" strokeWidth="1.200" />
          </Art>
        </div>
        <div className="ml-[12px] w-[60px] text-center leading-[17px] text-white">
          <div>5:31 AM</div>
          <div>11/15/2020</div>
        </div>
        <button aria-label="Show desktop" className="ml-[7px] h-full w-[14px] border border-[#4c5a6e] bg-linear-to-b from-[#aab7c8] via-[#7c8ba0] to-[#96a5b8]" />
      </div>
    </nav>
  );
}

export default function App() {
  return (
    <div className="flex h-screen min-h-[600px] flex-col overflow-hidden bg-[#bfdbff] font-['Noto_Sans','Open_Sans',sans-serif] text-[11px]">
      <TitleBar />
      <div role="tablist" aria-label="Ribbon" className="flex h-[25px] shrink-0 items-center border-b border-[#8db2e3] pt-[2px] pl-[48px] text-[#15428b]">
        <button role="tab" aria-selected="true" className="mr-[3px] -mb-px h-[22px] w-[54px] self-end rounded-t-[4px] border border-b-0 border-[#8db2e3] bg-[#e6eef8]">
          Home
        </button>
        {tabs.map(([name, box]) => (
          <button key={name} role="tab" aria-selected="false" className={box}>
            {name}
          </button>
        ))}
        <span className="flex-1" />
        <button aria-label="Help" className="mr-[4px]">
          <Art w={14} h={14}>
            <circle cx="7" cy="7" r="6.500" fill="#2f62d8" stroke="#dfe9fa" />
            <circle cx="7" cy="7" r="6.500" stroke="#4768a8" strokeWidth=".6" />
            <path d="M5 5.500c0-3 4.500-2.500 4 0-.3 1.200-2 1.300-2 2.800M7 9.500v1.500" stroke="#fff" strokeWidth="1.500" />
          </Art>
        </button>
      </div>
      <div className="mx-[2px] flex h-[89px] shrink-0 gap-[3px] rounded-b-[4px] border-b border-[#7fc4e6] bg-linear-to-b from-[#dbe6f4] via-[#c9daee] via-40% to-[#e0f2fe] pt-[2px] pb-px pl-[2px]">
        <ClipboardGroup />
        <FontGroup />
        <ParagraphGroup />
        <StylesGroup />
        <EditingGroup />
      </div>
      <Ruler />
      <Workspace />
      <StatusBar />
      <Taskbar />
    </div>
  );
}
